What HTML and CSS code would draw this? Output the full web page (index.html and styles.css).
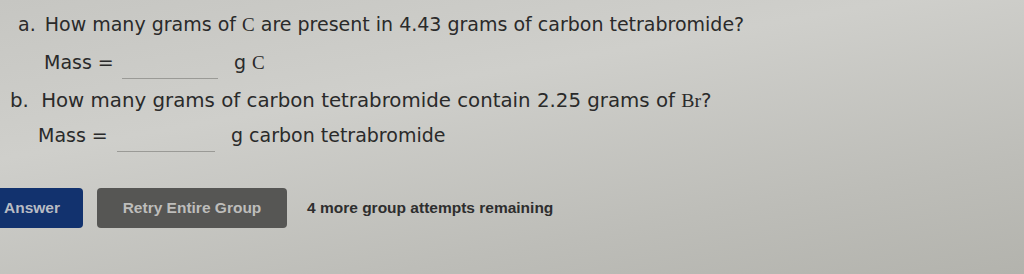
FILE: index.html
```html
<!DOCTYPE html>
<html lang="en">
<head>
    <meta charset="UTF-8">
    <title>Carbon tetrabromide</title>
    <link rel="stylesheet" href="styles.css">
</head>
<body>
    <div class="group">
        <!-- part a -->
        <div class="part part-a">
            <p class="question"><span class="letter">a.</span> How many grams of <span class="chem">C</span> are present in 4.43 grams of carbon tetrabromide?</p>
            <div class="answer-row">
                <span class="label">Mass =</span>
                <input type="text" class="blank">
                <span class="unit">g <span class="chem">C</span></span>
            </div>
        </div>

        <!-- part b -->
        <div class="part part-b">
            <p class="question"><span class="letter">b.</span> How many grams of carbon tetrabromide contain 2.25 grams of <span class="chem">Br</span>?</p>
            <div class="answer-row">
                <span class="label">Mass =</span>
                <input type="text" class="blank">
                <span class="unit">g carbon tetrabromide</span>
            </div>
        </div>
    </div>

    <div class="actions">
        <button class="btn btn-answer">Answer</button>
        <button class="btn btn-retry">Retry Entire Group</button>
        <span class="attempts">4 more group attempts remaining</span>
    </div>
</body>
</html>
```

FILE: styles.css
```css
body {
    margin: 0;
    height: 274px;
    overflow: hidden;
    background: linear-gradient(170deg, #c6c6c2 0%, #cfcfcb 35%, #bdbdb8 75%, #b3b3ad 100%);
    color: #2a2a2a;
    font-family: "DejaVu Sans", Verdana, sans-serif;
    font-size: 19px;
}

.group {
    padding-top: 12px;
}

.part-a {
    padding-left: 18px;
}

.part-b {
    padding-left: 10px;
    margin-top: 13px;
}

.question {
    margin: 0;
    line-height: 24px;
}

.part-b .question {
    font-size: 19.8px;
}

.letter {
    margin-right: 3px;
}

.part-b .letter {
    margin-right: 6px;
}

.chem {
    font-family: "Liberation Serif", "Times New Roman", serif;
}

.answer-row {
    display: flex;
    align-items: center;
    margin-top: 12px;
    padding-left: 26px;
    height: 26px;
}

.label {
    width: 78px;
}

.blank {
    width: 96px;
    height: 22px;
    border: none;
    border-bottom: 1px solid #9a9a96;
    background: transparent;
    margin: 10px 16px 0 0;
    padding: 0;
}

.part-b .answer-row {
    margin-top: 9px;
    padding-left: 28px;
}

.part-b .label {
    width: 79px;
}

.part-b .blank {
    width: 98px;
}

.actions {
    display: flex;
    align-items: center;
    gap: 14px;
    margin-top: 40px;
    font-family: "Liberation Sans", Arial, sans-serif;
    font-weight: bold;
    font-size: 15.5px;
}

.btn {
    height: 40px;
    border: none;
    border-radius: 4px;
    font: inherit;
    cursor: pointer;
}

.btn-answer {
    width: 83px;
    background: #12326e;
    color: #b8bcc4;
    border-radius: 0 4px 4px 0;
    text-align: left;
    padding-left: 4px;
}

.btn-retry {
    width: 190px;
    background: #565654;
    color: #bdbdbb;
}

.attempts {
    margin-left: 6px;
    color: #2e2e2e;
}
```
